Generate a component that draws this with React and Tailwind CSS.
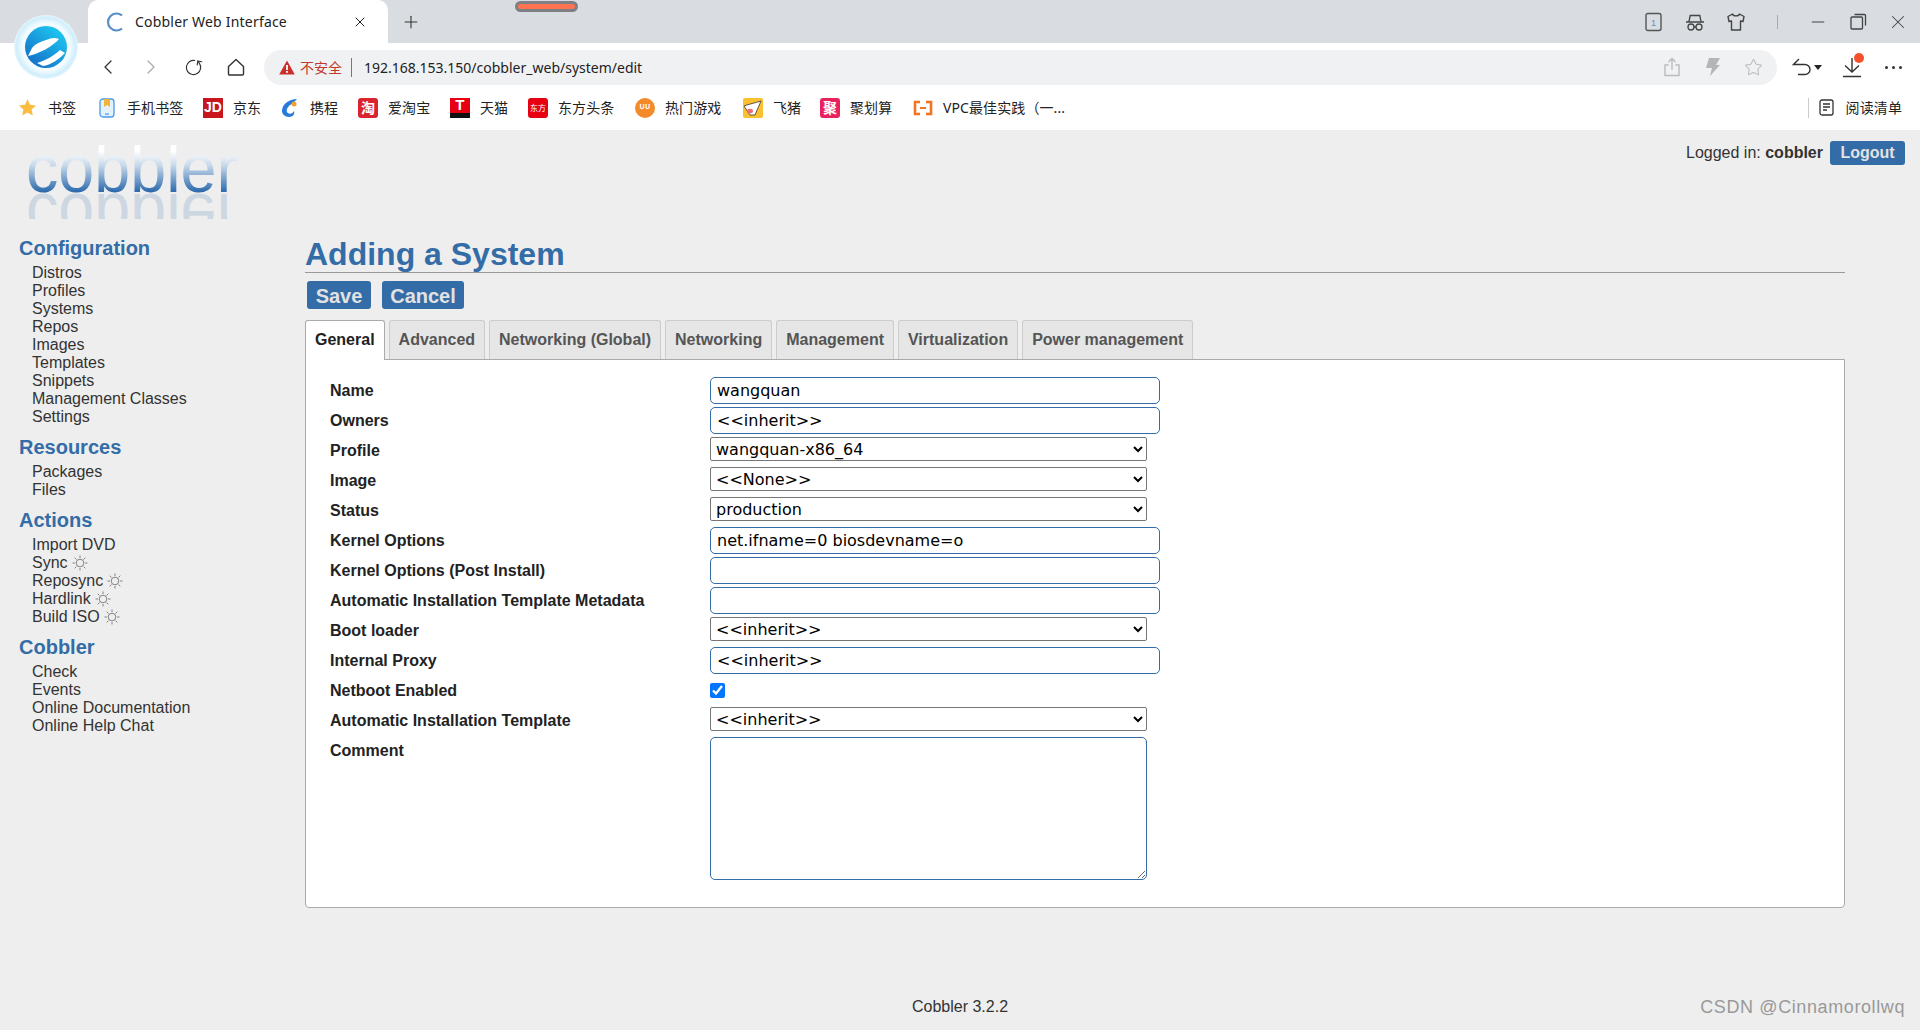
import { ChevronLeft, ChevronRight, RotateCw, Plus, X, Minus, Star } from "lucide-react";

const UI_FONT = "font-['Noto_Sans','Noto_Sans_CJK_SC',sans-serif]";
const PAGE_FONT = "font-['Liberation_Sans',Arial,sans-serif]";

const configLinks = ["Distros", "Profiles", "Systems", "Repos", "Images", "Templates", "Snippets", "Management Classes", "Settings"];
const tabs = ["General", "Advanced", "Networking (Global)", "Networking", "Management", "Virtualization", "Power management"];

// Icons for the browser toolbar
function HomeIcon() {
  return (
    <svg width="20" height="20" viewBox="0 0 20 20" fill="none" stroke="#333" strokeWidth="1.4">
      <path d="M2.5 9.5 10 2.5l7.5 7V17a1 1 0 0 1-1 1h-13a1 1 0 0 1-1-1z" strokeLinejoin="round" />
    </svg>
  );
}

function WarnIcon() {
  return (
    <svg width="16" height="15" viewBox="0 0 16 15">
      <path d="M8 .5 15.8 14.5H.2z" fill="#c9302c" />
      <rect x="7.1" y="5" width="1.8" height="5" fill="#fff" />
      <rect x="7.1" y="11" width="1.8" height="1.8" fill="#fff" />
    </svg>
  );
}

function TabCountIcon() {
  return (
    <svg width="18" height="20" viewBox="0 0 18 20" fill="none">
      <rect x="1" y="1.5" width="15" height="17" rx="2" stroke="#555" strokeWidth="1.4" />
      <text x="8.5" y="13.5" fontSize="9" fill="#5a8fc0" textAnchor="middle" fontFamily="Liberation Sans">1</text>
    </svg>
  );
}

function IncognitoIcon() {
  return (
    <svg width="20" height="20" viewBox="0 0 20 20" fill="none" stroke="#444" strokeWidth="1.3">
      <path d="M1 10h18M4 9.5 5.2 3.5h9.6L16 9.5" />
      <circle cx="6" cy="15" r="3" />
      <circle cx="14" cy="15" r="3" />
      <path d="M9 15h2" />
    </svg>
  );
}

function ShirtIcon() {
  return (
    <svg width="20" height="20" viewBox="0 0 20 20" fill="none" stroke="#444" strokeWidth="1.4" strokeLinejoin="round">
      <path d="M6.5 2 2 4.5l1 5 2.5-.5V18h9V9l2.5.5 1-5L13.500 2c-.5 2.500-6.500 2.500-7 0z" />
    </svg>
  );
}

function RestoreIcon() {
  return (
    <svg width="17" height="17" viewBox="0 0 17 17" fill="none" stroke="#444" strokeWidth="1.3">
      <rect x="1" y="4" width="11.500" height="12" rx="1" />
      <path d="M4.500 1.500h10a1 1 0 0 1 1 1v10" />
    </svg>
  );
}

function ShareIcon() {
  return (
    <svg width="18" height="20" viewBox="0 0 18 20" fill="none" stroke="#bbb" strokeWidth="1.4">
      <path d="M5.500 8H2v10.500h14V8h-3.500M9 13V2M5.500 5 9 1.500 12.500 5" />
    </svg>
  );
}

function BoltIcon() {
  return (
    <svg width="16" height="20" viewBox="0 0 16 20">
      <path d="M4 1h11l-4 7h4L5 19l2-8H1z" fill="#b5b5b5" />
    </svg>
  );
}

function UndoIcon() {
  return (
    <svg width="20" height="18" viewBox="0 0 20 18" fill="none" stroke="#333" strokeWidth="1.4">
      <path d="M7 1 1.500 6.500H13a5 5 0 0 1 0 10H6" />
    </svg>
  );
}

function DownloadIcon() {
  return (
    <span className="relative flex">
      <svg width="20" height="22" viewBox="0 0 20 22" fill="none" stroke="#333" strokeWidth="1.4">
        <path d="M10 2v14M3 9.500 10 16l7-6.500M1 20.500h18" />
      </svg>
      <span className="absolute -top-[3px] left-[12px] w-[10px] h-[10px] rounded-full bg-[#f4512c]" />
    </span>
  );
}

function ListIcon() {
  return (
    <svg width="15" height="17" viewBox="0 0 15 17" fill="none" stroke="#333" strokeWidth="1.300">
      <rect x="1" y="1" width="13" height="15" rx="2" />
      <path d="M4 5h7M4 8h7M4 11h4" />
    </svg>
  );
}

function BrowserLogo() {
  return (
    <svg width="66" height="70" viewBox="0 0 66 70">
      <defs>
        <radialGradient id="halo" cx="50%" cy="50%" r="50%">
          <stop offset="0%" stopColor="#ffffff" />
          <stop offset="75%" stopColor="#f2fbff" />
          <stop offset="92%" stopColor="#cfeefb" />
          <stop offset="100%" stopColor="#e8f6fc" />
        </radialGradient>
        <linearGradient id="eBlue" x1="0.900" y1="0" x2="0.100" y2="1">
          <stop offset="0%" stopColor="#1fd0f5" />
          <stop offset="100%" stopColor="#1468c4" />
        </linearGradient>
      </defs>
      <circle cx="33" cy="34" r="32" fill="url(#halo)" />
      <circle cx="33" cy="34" r="21" fill="url(#eBlue)" />
      <path d="M15 43C26 41 40 33 46 26 42 24 38 25 33 27 27 29 22 31 19 35z" fill="#fff" />
      <path d="M24 50C32 48 42 42 47 37L52 40C46 46 38 52 30 53z" fill="#fff" />
    </svg>
  );
}

function CobblerLogo() {
  return (
    <svg width="216" height="74" viewBox="0 0 216 74">
      <defs>
        <linearGradient id="logoFill" gradientUnits="userSpaceOnUse" x1="0" y1="6" x2="0" y2="48">
          <stop offset="0%" stopColor="#ffffff" />
          <stop offset="35%" stopColor="#c6d8ea" />
          <stop offset="100%" stopColor="#2565aa" />
        </linearGradient>
      </defs>
      <text x="1" y="47" fontFamily="Liberation Sans" fontSize="68" fill="url(#logoFill)" textLength="212" lengthAdjust="spacingAndGlyphs">cobbler</text>
      <g transform="translate(0 96) scale(1 -1)" opacity="0.16">
        <text x="1" y="47" fontFamily="Liberation Sans" fontSize="68" fill="#2565aa" textLength="212" lengthAdjust="spacingAndGlyphs">cobbler</text>
      </g>
    </svg>
  );
}

function Bookmark({ icon, label, width }) {
  return (
    <div className={`flex items-center gap-[10px] ${width}`}>
      <span className="flex w-[20px] h-[20px] shrink-0 items-center justify-center">{icon}</span>
      <span className="whitespace-nowrap">{label}</span>
    </div>
  );
}

const square = "flex w-[20px] h-[20px] items-center justify-center text-white";

const bookmarks = [
  { label: "手机书签", width: "w-[106px]", icon: (
    <svg width="16" height="20" viewBox="0 0 16 20"><rect x="1" y="1" width="14" height="18" rx="3" fill="#e3f1fd" stroke="#4a9ae8" strokeWidth="1.300" /><path d="M5 1h6v8L8 7 5 9z" fill="#f3b33d" /><rect x="6" y="15.500" width="4" height="1.200" fill="#4a9ae8" /></svg>
  ) },
  { label: "京东", width: "w-[77px]", icon: <span className={`${square} bg-[#c9151e] text-[14px] font-bold font-['Liberation_Sans']`}>JD</span> },
  { label: "携程", width: "w-[78px]", icon: (
    <svg width="20" height="20" viewBox="0 0 20 20"><path d="M17 1C10 1 3 5 2 12c-.5 4 3 7 7 7 4 0 6-3 5-6-1 2-3 3-5 2.500C6 15 6 11 9 8c2-2 5-3 8-7z" fill="#2a7bd8" /><circle cx="14" cy="6" r="2.500" fill="#f0a030" /></svg>
  ) },
  { label: "爱淘宝", width: "w-[92px]", icon: <span className={`${square} bg-[#d9232e] rounded-[3px] text-[14px] font-bold`}>淘</span> },
  { label: "天猫", width: "w-[78px]", icon: <span className={`${square} bg-[linear-gradient(#e60012_75%,#111_75%)] text-[15px] font-bold font-['Liberation_Sans'] pb-[4px]`}>T</span> },
  { label: "东方头条", width: "w-[107px]", icon: <span className={`${square} bg-[#e60012] rounded-[3px] text-[8px]`}>东方</span> },
  { label: "热门游戏", width: "w-[108px]", icon: <span className={`${square} bg-[#f58a2b] rounded-full text-[7px] font-bold`}>UU</span> },
  { label: "飞猪", width: "w-[77px]", icon: (
    <svg width="20" height="20" viewBox="0 0 20 20"><rect width="20" height="20" rx="2" fill="#fbc02d" /><path d="M1 8c5-2 11-3 17-5-2 5-4 9-6 14H7C5 14 3 11 1 8z" fill="#fff" stroke="#333" strokeWidth="0.800" /><ellipse cx="7" cy="13" rx="3" ry="2.200" fill="#ef6a7a" /></svg>
  ) },
  { label: "聚划算", width: "w-[93px]", icon: <span className={`${square} bg-[#e9215c] rounded-[3px] text-[14px] font-bold`}>聚</span> },
  { label: "VPC最佳实践（一...", width: "", icon: (
    <svg width="20" height="16" viewBox="0 0 20 16" fill="none" stroke="#f5741f" strokeWidth="2.600"><path d="M7 2H2v12h5M13 2h5v12h-5" /><path d="M7 8h6" strokeWidth="2" /></svg>
  ) },
];

function BrowserChrome() {
  return (
    <div className={`relative shrink-0 ${UI_FONT} text-[#222]`}>
      <div className="absolute left-[13px] top-[13px] z-10"><BrowserLogo /></div>

      {/* tab strip */}
      <div className="relative flex h-[43px] items-center bg-[#d9dce1] pl-[88px]">
        <div className="flex h-[43px] w-[300px] items-center rounded-t-[10px] bg-white pl-[17px] pr-[20px] text-[14px]">
          <svg width="22" height="22" viewBox="0 0 22 22" fill="none" className="mr-[8px]">
            <path d="M17 4.500A8.500 8.500 0 1 0 17 17.500" stroke="#5b8fc7" strokeWidth="2.200" />
          </svg>
          <span className="flex-1 whitespace-nowrap tracking-[0.2px]">Cobbler Web Interface</span>
          <X size={16} strokeWidth={1.500} className="text-[#222]" />
        </div>
        <Plus size={20} strokeWidth={1.300} className="ml-[13px] text-[#333]" />
        <div className="absolute left-[515px] top-[1px] h-[11px] w-[63px] rounded-full border-[3px] border-[#7d8186] bg-[#ff7350]" />
        <div className="ml-auto mr-[11px] flex items-center text-[#444]">
          <TabCountIcon />
          <span className="ml-[22px] flex"><IncognitoIcon /></span>
          <span className="ml-[21px] flex"><ShirtIcon /></span>
          <span className="ml-[31px] h-[14px] w-px bg-[#aaa]" />
          <Minus size={20} strokeWidth={1.200} className="ml-[30px]" />
          <span className="ml-[22px] flex"><RestoreIcon /></span>
          <X size={22} strokeWidth={1.100} className="ml-[20px]" />
        </div>
      </div>

      {/* address row */}
      <div className="flex h-[42px] items-center bg-white pl-[96px] pt-[6px]">
        <ChevronLeft size={24} strokeWidth={1.300} className="text-[#333]" />
        <ChevronRight size={24} strokeWidth={1.300} className="ml-[19px] text-[#aaa]" />
        <RotateCw size={19} strokeWidth={1.500} className="ml-[21px] -scale-x-100 rotate-[100deg] text-[#333]" />
        <span className="ml-[23px] flex"><HomeIcon /></span>
        <div className="ml-[18px] flex h-[35px] w-[1513px] items-center rounded-full bg-[#f0f1f3] pl-[15px] pr-[14px]">
          <WarnIcon />
          <span className="ml-[5px] text-[14px] text-[#c0392b]">不安全</span>
          <span className="ml-[9px] h-[19px] w-px bg-[#777]" />
          <span className="ml-[12px] text-[14px] text-[#222]">192.168.153.150/cobbler_web/system/edit</span>
          <div className="ml-auto flex items-center">
            <ShareIcon />
            <span className="ml-[24px] flex"><BoltIcon /></span>
            <Star size={19} strokeWidth={1.300} className="ml-[23px] text-[#bbb]" />
          </div>
        </div>
        <div className="ml-[15px] flex items-center">
          <UndoIcon />
          <span className="ml-[2px] border-x-[4px] border-t-[5px] border-x-transparent border-t-[#222]" />
          <span className="ml-[20px] flex"><DownloadIcon /></span>
          <span className="ml-[23px] flex gap-[4px]">
            <span className="h-[3px] w-[3px] rounded-full bg-[#333]" />
            <span className="h-[3px] w-[3px] rounded-full bg-[#333]" />
            <span className="h-[3px] w-[3px] rounded-full bg-[#333]" />
          </span>
        </div>
      </div>

      {/* bookmarks */}
      <div className="flex h-[45px] items-center bg-white pl-[18px] text-[14px] tracking-[0.1px]">
        <div className="flex w-[79px] items-center gap-[11px]">
          <svg width="19" height="19" viewBox="0 0 24 24"><path d="m12 1.500 3.200 7 7.600.9-5.600 5.200 1.500 7.500L12 18.300l-6.700 3.800 1.500-7.500L1.200 9.400l7.600-.9z" fill="#fbbc3f" /></svg>
          <span>书签</span>
        </div>
        {bookmarks.map((b) => (
          <Bookmark key={b.label} {...b} />
        ))}
        <div className="ml-auto flex h-[20px] items-center border-l border-[#ccc] pl-[10px] pr-[18px]">
          <ListIcon />
          <span className="ml-[12px]">阅读清单</span>
        </div>
      </div>
    </div>
  );
}

function SunIcon() {
  return (
    <svg width="16" height="16" viewBox="0 0 16 16" fill="none" stroke="#777" strokeWidth="0.900" className="ml-[4px] inline-block align-[-3px]">
      <circle cx="8" cy="8" r="3.800" />
      <path d="M8 .5v2.500M8 13v2.500M.5 8H3M13 8h2.500M2.700 2.700l1.800 1.800M11.500 11.500l1.800 1.800M2.700 13.300l1.800-1.800M11.500 4.500l1.800-1.800" />
    </svg>
  );
}

function NavSection({ title, links, className }) {
  return (
    <div className={className}>
      <h3 className="text-[20px] font-bold leading-[20px] text-[#336ca6]">{title}</h3>
      <ul className="mt-[6px] pl-[13px] text-[16px] leading-[18px] text-[#333]">
        {links.map((l) => (
          <li key={l.name || l} className="whitespace-nowrap">
            {l.name || l}
            {l.sun && <SunIcon />}
          </li>
        ))}
      </ul>
    </div>
  );
}

function Sidebar() {
  return (
    <aside className="w-[305px] shrink-0 pl-[19px]">
      <div className="h-[108px] pl-[6px] pt-[15px]"><CobblerLogo /></div>
      <NavSection title="Configuration" links={configLinks} />
      <NavSection title="Resources" links={["Packages", "Files"]} className="mt-[11px]" />
      <NavSection
        title="Actions"
        links={["Import DVD", { name: "Sync", sun: true }, { name: "Reposync", sun: true }, { name: "Hardlink", sun: true }, { name: "Build ISO", sun: true }]}
        className="mt-[11px]"
      />
      <NavSection title="Cobbler" links={["Check", "Events", "Online Documentation", "Online Help Chat"]} className="mt-[11px]" />
    </aside>
  );
}

const fieldText = "font-['DejaVu_Sans',Verdana,sans-serif] text-[16px] text-black bg-white";
const inputClass = `${fieldText} block h-[27px] w-[450px] rounded-[5px] border border-[#336ca6] px-[6px] outline-none`;
const selectClass = `${fieldText} block h-[24px] w-[437px] rounded-[2px] border border-[#767676] pl-[1px] outline-none`;

function Row({ label, children }) {
  return (
    <div className="flex h-[30px]">
      <label className="w-[380px] shrink-0 text-[16px] font-bold leading-[28px] text-[#222]">{label}</label>
      {children}
    </div>
  );
}

function GeneralForm() {
  return (
    <div className="px-[24px] pt-[17px]">
      <Row label="Name"><input className={inputClass} defaultValue="wangquan" /></Row>
      <Row label="Owners"><input className={inputClass} defaultValue="<<inherit>>" /></Row>
      <Row label="Profile"><select className={selectClass} defaultValue="wangquan-x86_64"><option>wangquan-x86_64</option></select></Row>
      <Row label="Image"><select className={selectClass} defaultValue="<<None>>"><option>{"<<None>>"}</option></select></Row>
      <Row label="Status"><select className={selectClass} defaultValue="production"><option>production</option></select></Row>
      <Row label="Kernel Options"><input className={inputClass} defaultValue="net.ifname=0 biosdevname=o" /></Row>
      <Row label="Kernel Options (Post Install)"><input className={inputClass} /></Row>
      <Row label="Automatic Installation Template Metadata"><input className={inputClass} /></Row>
      <Row label="Boot loader"><select className={selectClass} defaultValue="<<inherit>>"><option>{"<<inherit>>"}</option></select></Row>
      <Row label="Internal Proxy"><input className={inputClass} defaultValue="<<inherit>>" /></Row>
      <Row label="Netboot Enabled"><input type="checkbox" defaultChecked className="mt-[6px] h-[15px] w-[15px]" /></Row>
      <Row label="Automatic Installation Template"><select className={selectClass} defaultValue="<<inherit>>"><option>{"<<inherit>>"}</option></select></Row>
      <div className="flex">
        <label className="w-[380px] shrink-0 text-[16px] font-bold leading-[28px] text-[#222]">Comment</label>
        <textarea className={`${fieldText} block h-[143px] w-[437px] rounded-[5px] border border-[#336ca6] outline-none`} />
      </div>
    </div>
  );
}

function Main() {
  return (
    <main className="flex-1 pr-[15px]">
      <div className="mt-[11px] flex h-[24px] items-center justify-end text-[16px] text-[#333]">
        Logged in:&nbsp;<b>cobbler</b>
        <a className="ml-[7px] flex h-[24px] w-[75px] items-center justify-center rounded-[3px] bg-[#336ca6] font-bold text-[#e2e2e2]">Logout</a>
      </div>
      <div className="mr-[60px]">
        <h1 className="mt-[71px] h-[37px] border-b border-[#999] text-[32px] font-bold leading-[36px] text-[#336ca6]">Adding a System</h1>
        <div className="ml-[2px] mt-[8px] flex gap-[11px]">
          <button className="h-[28px] w-[64px] rounded-[3px] bg-[#336ca6] text-[20px] font-bold text-[#e2e2e2]">Save</button>
          <button className="h-[28px] w-[82px] rounded-[3px] bg-[#336ca6] text-[20px] font-bold text-[#e2e2e2]">Cancel</button>
        </div>
        <div className="relative z-10 mt-[11px] flex h-[39px] gap-[4px]">
          {tabs.map((t, i) => (
            <div
              key={t}
              className={
                i === 0
                  ? "h-[40px] rounded-t-[3px] border border-b-0 border-[#aaa] bg-white px-[9px] text-[16px] font-bold leading-[37px] text-[#222]"
                  : "h-[39px] rounded-t-[3px] border border-b-0 border-[#ccc] bg-[#e6e6e6] px-[9px] text-[16px] font-bold leading-[37px] text-[#555]"
              }
            >
              {t}
            </div>
          ))}
        </div>
        <div className="h-[549px] rounded-b-[4px] border border-[#aaa] bg-white">
          <GeneralForm />
        </div>
      </div>
    </main>
  );
}

export default function App() {
  return (
    <div className="relative flex h-[1030px] w-[1920px] flex-col overflow-hidden bg-[#eeeeee]">
      <BrowserChrome />
      <div className={`flex flex-1 flex-col ${PAGE_FONT}`}>
        <div className="flex flex-1">
          <Sidebar />
          <Main />
        </div>
        <footer className="mb-[14px] text-center text-[16px] leading-[18px] text-[#333]">Cobbler 3.2.2</footer>
      </div>
      <div className={`absolute bottom-[9px] right-[15px] text-[18px] tracking-[0.6px] text-[#999] ${PAGE_FONT}`}>CSDN @Cinnamorollwq</div>
    </div>
  );
}
